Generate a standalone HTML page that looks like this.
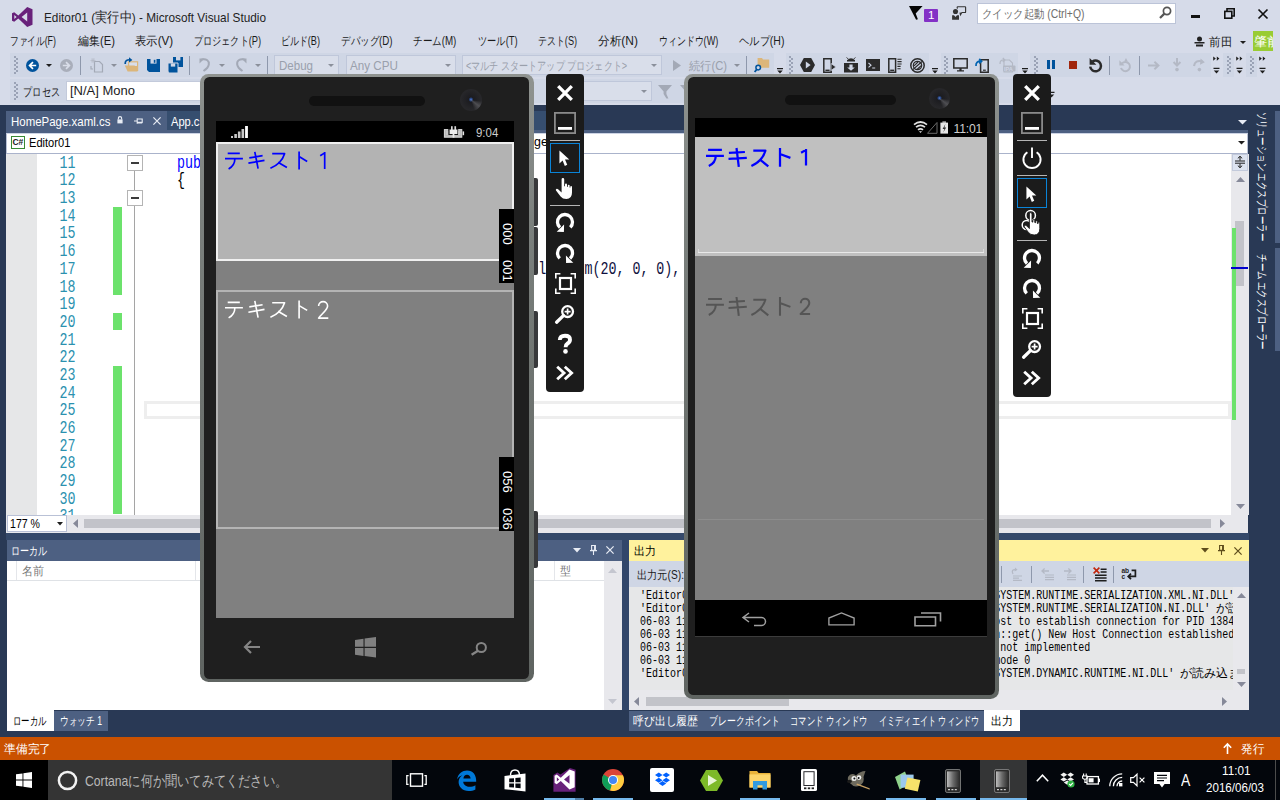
<!DOCTYPE html>
<html><head><meta charset="utf-8">
<style>
*{box-sizing:border-box;margin:0;padding:0}
html,body{width:1280px;height:800px;overflow:hidden;background:#D6DBE9;font-family:"Liberation Sans",sans-serif;}
#r{position:relative;width:1280px;height:800px;overflow:hidden;background:#D6DBE9;}
.a{position:absolute}
.t{position:absolute;white-space:nowrap;line-height:1}
svg{position:absolute;overflow:visible}
svg text{font-family:"Liberation Sans",sans-serif}
.grip{position:absolute;width:4px;height:18px;margin-left:1px;background-image:radial-gradient(circle at 1px 1px,#626b82 0.5px,transparent 0.9px),radial-gradient(circle at 3px 3px,#626b82 0.5px,transparent 0.9px);background-size:4px 4px;}
.sep{position:absolute;width:1px;background:#8e98ac}
.ln{position:absolute;white-space:nowrap;line-height:1;font-family:"Liberation Mono",monospace;font-size:13.33px;color:#2B91AF;left:59.5px;transform:scaleY(1.4);transform-origin:0 50%;}
.gb{position:absolute;background:#6CE26C;left:113px;width:9px}
.ot{position:absolute;white-space:pre;line-height:1;font-family:"Liberation Mono",monospace;font-size:10px;color:#000;transform:scaleY(1.22);transform-origin:0 50%;}
</style></head><body><div id="r">
<svg style="left:12px;top:7px" width="21" height="20" viewBox="0 0 21 20"><path d="M15.2 0 L20.5 2.2 V17.8 L15.2 20 L6.3 11.6 L2.2 14.8 L0 13.7 V6.3 L2.2 5.2 L6.3 8.4 Z M15.2 5.6 L9.6 10 L15.2 14.4 Z M2.3 7.9 V12.1 L4.6 10 Z" fill="#68217A" fill-rule="evenodd"/></svg>
<svg style="left:44px;top:0" width="222.0" height="1"><text x="0" y="22.4" font-size="13.5" fill="#1e1e1e" textLength="222.0" lengthAdjust="spacingAndGlyphs" >Editor01 (実行中) - Microsoft Visual Studio</text></svg>
<svg style="left:909px;top:6.1px" width="14" height="15" viewBox="0 0 14 15"><path d="M0 0H13.6L6.7 7.5L8.9 13.3L7.1 13.8Z" fill="#050505"/></svg>
<div class="a" style="left:924px;top:9px;width:14px;height:13px;background:#8331c6;border-radius:1px"></div>
<div class="t" style="left:928px;top:9.8px;font-size:11.5px;color:#fff;">1</div>
<svg style="left:952px;top:6px" width="15" height="14" viewBox="0 0 15 14"><path d="M5.2 4V1.3Q5.2 0.7 5.8 0.7H13Q13.6 0.7 13.6 1.3V5.9Q13.6 6.5 13 6.5H9.9L8.5 8.7L8 6.5" fill="none" stroke="#333" stroke-width="1.15"/><circle cx="3.5" cy="5.5" r="3.3" fill="#D6DBE9"/><circle cx="3.5" cy="5.5" r="2.55" fill="#333"/><path d="M0.1 9.3H2L3.5 11L5 9.3H7V13.8H0.1Z" fill="#333"/></svg>
<div class="a" style="left:976.5px;top:2.5px;width:199px;height:21.5px;background:#fff;border:1px solid #bcc4d8"></div>
<svg style="left:981.5px;top:0" width="102.5" height="1"><text x="0" y="17.7" font-size="12" fill="#6e6e6e" textLength="102.5" lengthAdjust="spacingAndGlyphs" >クイック起動 (Ctrl+Q)</text></svg>
<svg style="left:1159px;top:6px" width="13" height="13" viewBox="0 0 13 13"><circle cx="8" cy="5" r="3.6" fill="none" stroke="#555" stroke-width="1.7"/><path d="M5.4 7.6L1 12" stroke="#555" stroke-width="2.2"/></svg>
<div class="a" style="left:1191px;top:15px;width:9px;height:2.6px;background:#111;"></div>
<svg style="left:1224px;top:8px" width="11" height="11" viewBox="0 0 11 11"><path d="M3 3V0.8H10.2V8H8" fill="none" stroke="#111" stroke-width="1.6"/><rect x="0.8" y="3.4" width="7" height="6.8" fill="none" stroke="#111" stroke-width="1.6"/></svg>
<svg style="left:1258px;top:8.5px" width="10" height="10" viewBox="0 0 10 10"><path d="M0.5 0.5L9.5 9.5M9.5 0.5L0.5 9.5" stroke="#111" stroke-width="1.7"/></svg>
<svg style="left:1194px;top:36px" width="11" height="11" viewBox="0 0 11 11"><circle cx="5.5" cy="3" r="2.5" fill="#222"/><path d="M0.5 6H10.5V7.5H0.5ZM2 8.5H9V10.5H2Z" fill="#222"/></svg>
<svg style="left:1209px;top:0" width="23.0" height="1"><text x="0" y="45.8" font-size="12" fill="#1b1b1c" textLength="23.0" lengthAdjust="spacingAndGlyphs" >前田</text></svg>
<svg style="left:1239.5px;top:40.5px" width="6" height="3" viewBox="0 0 6 3"><path d="M0 0H6L3 3Z" fill="#1e1e1e"/></svg>
<div class="a" style="left:1253px;top:31px;width:20px;height:20px;background:#99cc33;overflow:hidden"></div>
<svg style="left:1254px;top:0" width="26.0" height="1"><text x="0" y="46.0" font-size="12.5" fill="#fff" textLength="26.0" lengthAdjust="spacingAndGlyphs" >肇前</text></svg>
<div class="a" style="left:1273px;top:31px;width:7px;height:20px;background:#D6DBE9;"></div>
<svg style="left:10.3px;top:0" width="46.0" height="1"><text x="0" y="45.4" font-size="12.3" fill="#1b1b1c" textLength="46.0" lengthAdjust="spacingAndGlyphs" >ファイル(F)</text></svg>
<svg style="left:77.5px;top:0" width="36.9" height="1"><text x="0" y="45.4" font-size="12.3" fill="#1b1b1c" textLength="36.9" lengthAdjust="spacingAndGlyphs" >編集(E)</text></svg>
<svg style="left:135.3px;top:0" width="38.1" height="1"><text x="0" y="45.4" font-size="12.3" fill="#1b1b1c" textLength="38.1" lengthAdjust="spacingAndGlyphs" >表示(V)</text></svg>
<svg style="left:193.8px;top:0" width="67.2" height="1"><text x="0" y="45.4" font-size="12.3" fill="#1b1b1c" textLength="67.2" lengthAdjust="spacingAndGlyphs" >プロジェクト(P)</text></svg>
<svg style="left:281.3px;top:0" width="39.0" height="1"><text x="0" y="45.4" font-size="12.3" fill="#1b1b1c" textLength="39.0" lengthAdjust="spacingAndGlyphs" >ビルド(B)</text></svg>
<svg style="left:340.6px;top:0" width="51.6" height="1"><text x="0" y="45.4" font-size="12.3" fill="#1b1b1c" textLength="51.6" lengthAdjust="spacingAndGlyphs" >デバッグ(D)</text></svg>
<svg style="left:413px;top:0" width="43.3" height="1"><text x="0" y="45.4" font-size="12.3" fill="#1b1b1c" textLength="43.3" lengthAdjust="spacingAndGlyphs" >チーム(M)</text></svg>
<svg style="left:477.5px;top:0" width="39.7" height="1"><text x="0" y="45.4" font-size="12.3" fill="#1b1b1c" textLength="39.7" lengthAdjust="spacingAndGlyphs" >ツール(T)</text></svg>
<svg style="left:538.4px;top:0" width="39.1" height="1"><text x="0" y="45.4" font-size="12.3" fill="#1b1b1c" textLength="39.1" lengthAdjust="spacingAndGlyphs" >テスト(S)</text></svg>
<svg style="left:598.4px;top:0" width="40.0" height="1"><text x="0" y="45.4" font-size="12.3" fill="#1b1b1c" textLength="40.0" lengthAdjust="spacingAndGlyphs" >分析(N)</text></svg>
<svg style="left:658.8px;top:0" width="59.3" height="1"><text x="0" y="45.4" font-size="12.3" fill="#1b1b1c" textLength="59.3" lengthAdjust="spacingAndGlyphs" >ウィンドウ(W)</text></svg>
<svg style="left:739px;top:0" width="45.4" height="1"><text x="0" y="45.4" font-size="12.3" fill="#1b1b1c" textLength="45.4" lengthAdjust="spacingAndGlyphs" >ヘルプ(H)</text></svg>
<div class="a" style="left:10px;top:53px;width:764px;height:24px;background:#CFD6E5;"></div>
<div class="a" style="left:786px;top:53px;width:143px;height:24px;background:#CFD6E5;"></div>
<div class="a" style="left:941px;top:53px;width:77px;height:24px;background:#CFD6E5;"></div>
<div class="a" style="left:1030px;top:53px;width:181px;height:24px;background:#CFD6E5;"></div>
<div class="a" style="left:1223px;top:53px;width:11px;height:24px;background:#CFD6E5;"></div>
<div class="a" style="left:1246px;top:53px;width:11px;height:24px;background:#CFD6E5;"></div>
<div class="grip" style="left:12.5px;top:56px"></div>
<svg style="left:25.5px;top:58.5px" width="13" height="13" viewBox="0 0 13 13"><circle cx="6.5" cy="6.5" r="6.5" fill="#00539C"/><path d="M7 3.2L3.6 6.5L7 9.8M3.8 6.5H10.2" fill="none" stroke="#fff" stroke-width="1.7"/></svg>
<svg style="left:46px;top:64.0px" width="6" height="3" viewBox="0 0 6 3"><path d="M0 0H6L3 3Z" fill="#1e1e1e"/></svg>
<svg style="left:59.5px;top:58.5px" width="13" height="13" viewBox="0 0 13 13"><circle cx="6.5" cy="6.5" r="6.5" fill="#a9aeba"/><path d="M6 3.2L9.4 6.5L6 9.8M9.2 6.5H2.8" fill="none" stroke="#d9dde8" stroke-width="1.7"/></svg>
<div class="sep" style="left:80px;top:56px;height:19px"></div>
<svg style="left:90px;top:58px" width="14" height="15" viewBox="0 0 14 15"><path d="M4.5 3.5H9.5L12.5 6.5V14H4.5Z" fill="none" stroke="#a3a9b6" stroke-width="1.2"/><path d="M1 8V11H3" fill="none" stroke="#a3a9b6" stroke-width="1.1"/><path d="M3 0V5M0.5 2.5H5.5M1.2 0.8L4.8 4.2M4.8 0.8L1.2 4.2" stroke="#b5bac6" stroke-width="0.8"/></svg>
<svg style="left:111px;top:64.0px" width="6" height="3" viewBox="0 0 6 3"><path d="M0 0H6L3 3Z" fill="#8b909b"/></svg>
<svg style="left:123.5px;top:57px" width="15" height="15" viewBox="0 0 15 15"><path d="M4 4.2H14.2V14H4Z" fill="#DCB67A"/><path d="M5.2 5.4H13V9H5.2Z" fill="#d9deea"/><path d="M0.8 8.6H10.6L13.6 14.4H3.6Z" fill="#DCB67A"/><path d="M1.2 7Q0.8 2.4 6.4 2.8" fill="none" stroke="#00539C" stroke-width="1.7"/><path d="M5 0.2L8.4 2.9L5 5.6Z" fill="#00539C"/></svg>
<svg style="left:146.5px;top:58.5px" width="13" height="13" viewBox="0 0 13 13"><path d="M0 0H13V13H2L0 11Z" fill="#00539C"/><rect x="3.5" y="0" width="6" height="4.6" fill="#CFD6E5"/><rect x="6.8" y="0.8" width="1.6" height="3" fill="#00539C"/></svg>
<svg style="left:168px;top:57px" width="15" height="16" viewBox="0 0 15 16"><path d="M5 0H15V10H7L5 8.4Z" fill="#00539C"/><rect x="8" y="0" width="4.4" height="3.4" fill="#CFD6E5"/><path d="M0 6H10V16H1.6L0 14.6Z" fill="#00539C" stroke="#CFD6E5" stroke-width="1"/><rect x="2.8" y="6.4" width="4.4" height="3.2" fill="#CFD6E5"/></svg>
<div class="sep" style="left:189px;top:56px;height:19px"></div>
<svg style="left:199px;top:58px" width="12" height="14" viewBox="0 0 12 14"><path d="M2.5 1.5Q10.5 0.5 9.8 6.5Q9.3 9.8 4.5 13" fill="none" stroke="#a3a9b6" stroke-width="2"/><path d="M0.5 0.5H5.5L0.5 5.5Z" fill="#a3a9b6"/></svg>
<svg style="left:219px;top:64.0px" width="6" height="3" viewBox="0 0 6 3"><path d="M0 0H6L3 3Z" fill="#8b909b"/></svg>
<svg style="left:235px;top:58px" width="12" height="14" viewBox="0 0 12 14"><path d="M9.5 1.5Q1.5 0.5 2.2 6.5Q2.7 9.8 7.5 13" fill="none" stroke="#a3a9b6" stroke-width="2"/><path d="M11.5 0.5H6.5L11.5 5.5Z" fill="#a3a9b6"/></svg>
<svg style="left:254.5px;top:64.0px" width="6" height="3" viewBox="0 0 6 3"><path d="M0 0H6L3 3Z" fill="#8b909b"/></svg>
<div class="sep" style="left:267px;top:56px;height:19px"></div>
<div class="a" style="left:274px;top:55px;width:65px;height:20px;background:#D9DEEA;border:1px solid #bfc7da"></div><svg style="left:279px;top:0" width="34.0" height="1"><text x="0" y="69.5" font-size="12" fill="#9aa0ac" textLength="34.0" lengthAdjust="spacingAndGlyphs" >Debug</text></svg><svg style="left:328px;top:64.0px" width="6" height="3" viewBox="0 0 6 3"><path d="M0 0H6L3 3Z" fill="#8b909b"/></svg>
<div class="a" style="left:346px;top:55px;width:110px;height:20px;background:#D9DEEA;border:1px solid #bfc7da"></div><svg style="left:350px;top:0" width="48.0" height="1"><text x="0" y="69.5" font-size="12" fill="#9aa0ac" textLength="48.0" lengthAdjust="spacingAndGlyphs" >Any CPU</text></svg><svg style="left:445px;top:64.0px" width="6" height="3" viewBox="0 0 6 3"><path d="M0 0H6L3 3Z" fill="#8b909b"/></svg>
<div class="a" style="left:462px;top:55px;width:200px;height:20px;background:#D9DEEA;border:1px solid #bfc7da"></div><svg style="left:466px;top:0" width="161.0" height="1"><text x="0" y="69.5" font-size="12" fill="#9aa0ac" textLength="161.0" lengthAdjust="spacingAndGlyphs" >&lt;マルチ スタートアップ プロジェクト&gt;</text></svg><svg style="left:651px;top:64.0px" width="6" height="3" viewBox="0 0 6 3"><path d="M0 0H6L3 3Z" fill="#8b909b"/></svg>
<svg style="left:673px;top:59.5px" width="8" height="11" viewBox="0 0 8 11"><path d="M0 0L8 5.5L0 11Z" fill="#a3a9b6"/></svg>
<svg style="left:689px;top:0" width="38.0" height="1"><text x="0" y="69.5" font-size="12" fill="#9aa0ac" textLength="38.0" lengthAdjust="spacingAndGlyphs" >続行(C)</text></svg>
<svg style="left:734px;top:64.0px" width="6" height="3" viewBox="0 0 6 3"><path d="M0 0H6L3 3Z" fill="#8b909b"/></svg>
<div class="sep" style="left:746px;top:56px;height:19px"></div>
<svg style="left:754px;top:57.4px" width="16" height="16" viewBox="0 0 16 16"><path d="M3.6 1H8L9 2.4H15.2V10.8H3.6Z" fill="#DCB67A"/><circle cx="4.2" cy="10.6" r="2.3" fill="#CFD6E5" stroke="#00539C" stroke-width="1.5"/><path d="M2.8 12.4L0.6 15" stroke="#00539C" stroke-width="1.8"/></svg>
<svg style="left:776.5px;top:68px" width="6" height="6" viewBox="0 0 6 6"><path d="M0 0H6V1.2H0Z M0.3 2.6H5.7L3 5.6Z" fill="#1e1e1e"/></svg>
<div class="grip" style="left:788.0px;top:56px"></div>
<svg style="left:800px;top:58px" width="15" height="14" viewBox="0 0 15 14"><path d="M3.8 0H11.2L15 7L11.2 14H3.8L0 7Z" fill="#2b2b2b"/><path d="M5.8 3.6L10.6 7L5.8 10.4Z" fill="#CFD6E5"/></svg>
<svg style="left:823px;top:57.5px" width="13" height="15" viewBox="0 0 13 15"><path d="M0.8 0.8H8.2V14.2H0.8Z" fill="none" stroke="#2b2b2b" stroke-width="1.5"/><rect x="2.4" y="11.6" width="4.2" height="1.4" fill="#2b2b2b"/><path d="M8 5.5L13 9L8 12.5Z" fill="#2b2b2b" stroke="#CFD6E5" stroke-width="0.8"/></svg>
<svg style="left:844px;top:57px" width="14" height="16" viewBox="0 0 14 16"><path d="M3 3.2Q7 -0.6 11 3.2V4.4H3Z" fill="#2b2b2b"/><path d="M2.6 0.4L4.4 2.2M11.4 0.4L9.6 2.2" stroke="#2b2b2b" stroke-width="0.9"/><path d="M0 6H14V15.5H0Z" fill="#2b2b2b"/><path d="M5.4 7.6H8.6V10.4H10.8L7 13.8L3.2 10.4H5.4Z" fill="#CFD6E5"/></svg>
<svg style="left:866px;top:59px" width="14" height="12" viewBox="0 0 14 12"><rect width="14" height="12" fill="#2b2b2b"/><path d="M2.5 4L5 6.2L2.5 8.4M6.2 9H9.2" fill="none" stroke="#CFD6E5" stroke-width="1.1"/></svg>
<svg style="left:888px;top:57.5px" width="14" height="15" viewBox="0 0 14 15"><path d="M0.8 0.8H7.6V14.2H0.8Z" fill="none" stroke="#2b2b2b" stroke-width="1.5"/><rect x="2.2" y="11.6" width="4" height="1.4" fill="#2b2b2b"/><path d="M9.4 1.2H13.6M9.4 3.6H13.6M9.4 6H13.6M9.4 8.4H12.6M9.4 10.8H12.6" stroke="#2b2b2b" stroke-width="1.1"/></svg>
<svg style="left:910px;top:58px" width="15" height="15" viewBox="0 0 15 15"><circle cx="7.5" cy="7.5" r="6.7" fill="none" stroke="#2b2b2b" stroke-width="1.5"/><circle cx="7.5" cy="7.5" r="4.2" fill="none" stroke="#2b2b2b" stroke-width="1.2"/><path d="M3 11.5L12 3.5M4 7.8L8 4M7 11.5L11.2 7.6" stroke="#2b2b2b" stroke-width="1.1"/></svg>
<svg style="left:931.5px;top:68px" width="6" height="6" viewBox="0 0 6 6"><path d="M0 0H6V1.2H0Z M0.3 2.6H5.7L3 5.6Z" fill="#1e1e1e"/></svg>
<div class="grip" style="left:943.0px;top:56px"></div>
<svg style="left:953px;top:58px" width="15" height="14" viewBox="0 0 15 14"><path d="M0.8 0.8H14.2V10H0.8Z" fill="none" stroke="#2b2b2b" stroke-width="1.5"/><path d="M6.4 10H8.6V12.2H11V13.6H4V12.2H6.4Z" fill="#2b2b2b"/></svg>
<svg style="left:975px;top:56.5px" width="15" height="16" viewBox="0 0 15 16"><path d="M5.6 2.8H13.2V15.2H5.6Z" fill="none" stroke="#2b2b2b" stroke-width="1.5"/><rect x="8" y="12.6" width="2.8" height="1.2" fill="#2b2b2b"/><path d="M1 9Q0.6 4 6 4.2M4.2 2L6.6 4.2L4.2 6.4" fill="none" stroke="#0063B1" stroke-width="1.7"/></svg>
<svg style="left:999px;top:57px" width="17" height="16" viewBox="0 0 17 16"><path d="M5 3H10.5L13.5 6V15H5Z" fill="none" stroke="#b4b9c5" stroke-width="1.1"/><rect x="4" y="8.6" width="12.5" height="6" rx="1" fill="#b4b9c5"/><text x="5" y="13.6" font-size="5.6" font-weight="bold" fill="#CFD6E5">IPA</text><path d="M1 7Q0.8 2.6 5.4 3M3.8 1L5.8 3L3.8 5" fill="none" stroke="#b4b9c5" stroke-width="1.3"/></svg>
<svg style="left:1021.5px;top:68px" width="6" height="6" viewBox="0 0 6 6"><path d="M0 0H6V1.2H0Z M0.3 2.6H5.7L3 5.6Z" fill="#1e1e1e"/></svg>
<div class="grip" style="left:1033.0px;top:56px"></div>
<div class="a" style="left:1046.8px;top:60px;width:3px;height:9px;background:#00539C;"></div><div class="a" style="left:1052px;top:60px;width:3px;height:9px;background:#00539C;"></div>
<div class="a" style="left:1068.8px;top:60.8px;width:8.4px;height:8.4px;background:#A1260D;"></div>
<svg style="left:1088px;top:58px" width="15" height="15" viewBox="0 0 15 15"><path d="M4.6 3.4A5.4 5.4 0 1 1 2.2 8.6" fill="none" stroke="#2b2b2b" stroke-width="2.5"/><path d="M1.6 0V6.8H8.4Z" fill="#2b2b2b"/></svg>
<div class="sep" style="left:1109px;top:56px;height:19px"></div>
<svg style="left:1118px;top:58px" width="14" height="15" viewBox="0 0 14 15"><path d="M4 5.4A4.6 4.6 0 1 1 3 10" fill="none" stroke="#b4b9c5" stroke-width="2"/><path d="M1.4 2.2V7.4H6.6Z" fill="#b4b9c5"/><path d="M8 0L9.8 3.4L6.4 3Z" fill="#b4b9c5"/></svg>
<div class="sep" style="left:1139px;top:56px;height:19px"></div>
<svg style="left:1148px;top:60.5px" width="12" height="9" viewBox="0 0 12 9"><path d="M0 4.5H10M6.4 0.8L10.4 4.5L6.4 8.2" fill="none" stroke="#b4b9c5" stroke-width="2"/></svg>
<svg style="left:1172px;top:58px" width="10" height="14" viewBox="0 0 10 14"><path d="M5 0V7M1.6 4L5 7.6L8.4 4" fill="none" stroke="#b4b9c5" stroke-width="2"/><circle cx="5" cy="11.6" r="1.8" fill="#b4b9c5"/></svg>
<svg style="left:1193px;top:58px" width="13" height="14" viewBox="0 0 13 14"><path d="M1 8Q2 1.5 9.4 3.4" fill="none" stroke="#b4b9c5" stroke-width="2.1"/><path d="M7.6 0.4L11.8 4.2L7 6.8Z" fill="#b4b9c5"/><circle cx="6.4" cy="11.6" r="1.8" fill="#b4b9c5"/></svg>
<svg style="left:1213.0px;top:56px" width="7" height="20" viewBox="0 0 7 20"><path d="M0.2 0.4L2.8 2.6L0.2 4.8ZM3.8 0.4L6.4 2.6L3.8 4.8Z" fill="#1e1e1e"/><path d="M0.5 11.8H6.5V13H0.5ZM0.8 14.4H6.2L3.5 17.4Z" fill="#1e1e1e"/></svg>
<div class="grip" style="left:1225.5px;top:56px"></div>
<svg style="left:1236.0px;top:56px" width="7" height="20" viewBox="0 0 7 20"><path d="M0.2 0.4L2.8 2.6L0.2 4.8ZM3.8 0.4L6.4 2.6L3.8 4.8Z" fill="#1e1e1e"/><path d="M0.5 11.8H6.5V13H0.5ZM0.8 14.4H6.2L3.5 17.4Z" fill="#1e1e1e"/></svg>
<div class="grip" style="left:1248.5px;top:56px"></div>
<svg style="left:1259.0px;top:56px" width="7" height="20" viewBox="0 0 7 20"><path d="M0.2 0.4L2.8 2.6L0.2 4.8ZM3.8 0.4L6.4 2.6L3.8 4.8Z" fill="#1e1e1e"/><path d="M0.5 11.8H6.5V13H0.5ZM0.8 14.4H6.2L3.5 17.4Z" fill="#1e1e1e"/></svg>
<div class="a" style="left:10px;top:79px;width:1036px;height:24px;background:#CFD6E5;"></div>
<div class="grip" style="left:12.5px;top:82px"></div>
<svg style="left:23px;top:0" width="37.0" height="1"><text x="0" y="95.6" font-size="12" fill="#1b1b1c" textLength="37.0" lengthAdjust="spacingAndGlyphs" >プロセス</text></svg>
<div class="a" style="left:66px;top:80.5px;width:200px;height:20.5px;background:#fff;border:1px solid #c3cadb"></div>
<svg style="left:70px;top:0" width="65.0" height="1"><text x="0" y="95.4" font-size="12.3" fill="#1b1b1c" textLength="65.0" lengthAdjust="spacingAndGlyphs" >[N/A] Mono</text></svg>
<div class="a" style="left:560px;top:80.5px;width:92px;height:20.5px;background:#D9DEEA;border:1px solid #bfc7da"></div>
<svg style="left:640.5px;top:90.0px" width="6" height="3" viewBox="0 0 6 3"><path d="M0 0H6L3 3Z" fill="#8b909b"/></svg>
<svg style="left:658px;top:84.5px" width="14" height="14" viewBox="0 0 14 14"><path d="M0 0H14L8.4 6.4V9L10.4 13.5H8.4L5.6 9V6.4Z" fill="#a3a9b6"/></svg>
<svg style="left:680px;top:84.5px" width="14" height="14" viewBox="0 0 14 14"><path d="M0 0H14L8.4 6.4V9L10.4 13.5H8.4L5.6 9V6.4Z" fill="#a3a9b6"/></svg>
<svg style="left:1047.5px;top:86px" width="7" height="12" viewBox="0 0 7 12"><path d="M0.5 5.8H6.5V7H0.5ZM0.8 8.4H6.2L3.5 11.4Z" fill="#1e1e1e"/></svg>
<div class="a" style="left:0px;top:105px;width:1280px;height:632px;background:#293955;"></div>
<div class="a" style="left:6px;top:111px;width:161px;height:20px;background:#4D6082;"></div>
<svg style="left:10.6px;top:0" width="99.4" height="1"><text x="0" y="125.5" font-size="12.4" fill="#fff" textLength="99.4" lengthAdjust="spacingAndGlyphs" >HomePage.xaml.cs</text></svg>
<svg style="left:116.5px;top:116px" width="6" height="8" viewBox="0 0 6 8"><path d="M1.4 3.4V2.2Q1.4 0.6 3 0.6Q4.6 0.6 4.6 2.2V3.4" fill="none" stroke="#e8ecf4" stroke-width="1.1"/><rect x="0.4" y="3.4" width="5.2" height="4" fill="#e8ecf4"/></svg>
<svg style="left:134px;top:117px" width="9" height="8" viewBox="0 0 9 8"><path d="M0 4H3.2M3.2 1.2V6.8M3.2 2H8.2V5.4H3.2M3.2 6H8.2" fill="none" stroke="#e8ecf4" stroke-width="1.1"/></svg>
<svg style="left:152.5px;top:117px" width="8" height="8" viewBox="0 0 8 8"><path d="M0.4 0.4L7.6 7.6M7.6 0.4L0.4 7.6" stroke="#e8ecf4" stroke-width="1.2"/></svg>
<div class="a" style="left:167px;top:111px;width:398px;height:20px;background:#364E6F;"></div>
<svg style="left:171px;top:0" width="34.0" height="1"><text x="0" y="125.5" font-size="12.4" fill="#fff" textLength="34.0" lengthAdjust="spacingAndGlyphs" >App.cs</text></svg>
<div class="a" style="left:6px;top:130px;width:1242px;height:3px;background:#4D6082;"></div>
<svg style="left:1238px;top:120px" width="9" height="5" viewBox="0 0 9 5"><path d="M0 0H9L4.5 4.6Z" fill="#e8ecf4"/></svg>
<div class="a" style="left:6px;top:132.5px;width:1242px;height:21px;background:#fff;border:1px solid #b9c1d6;border-top-color:#ccd3e4;border-bottom:1.6px solid #aab3cb"></div>
<div class="a" style="left:11px;top:136px;width:14px;height:12.5px;background:#fff;border:1.2px solid #388A34"></div>
<div class="t" style="left:12.6px;top:138.1px;font-size:8.6px;color:#222;font-weight:bold;letter-spacing:-0.4px">C#</div>
<svg style="left:28.7px;top:0" width="41.3" height="1"><text x="0" y="147.1" font-size="12.4" fill="#000" textLength="41.3" lengthAdjust="spacingAndGlyphs" >Editor01</text></svg>
<div class="t" style="left:534px;top:136.4px;font-size:12.4px;color:#000;">ge</div>
<svg style="left:1238px;top:141px" width="7" height="4" viewBox="0 0 7 4"><path d="M0 0H7L3.5 3.6Z" fill="#1e1e1e"/></svg>
<div class="a" style="left:6px;top:153.5px;width:1242px;height:379px;background:#fff;"></div>
<div class="a" style="left:6px;top:153.5px;width:31px;height:361px;background:#E6E7E8;"></div>
<div class="ln" style="top:156.7px">11</div>
<div class="ln" style="top:174.4px">12</div>
<div class="ln" style="top:192.1px">13</div>
<div class="ln" style="top:209.7px">14</div>
<div class="ln" style="top:227.4px">15</div>
<div class="ln" style="top:245.1px">16</div>
<div class="ln" style="top:262.8px">17</div>
<div class="ln" style="top:280.5px">18</div>
<div class="ln" style="top:298.1px">19</div>
<div class="ln" style="top:315.8px">20</div>
<div class="ln" style="top:333.5px">21</div>
<div class="ln" style="top:351.2px">22</div>
<div class="ln" style="top:368.9px">23</div>
<div class="ln" style="top:386.5px">24</div>
<div class="ln" style="top:404.2px">25</div>
<div class="ln" style="top:421.9px">26</div>
<div class="ln" style="top:439.6px">27</div>
<div class="ln" style="top:457.3px">28</div>
<div class="ln" style="top:474.9px">29</div>
<div class="ln" style="top:492.6px">30</div>
<div class="ln" style="top:510.3px">31</div>
<div class="gb" style="top:206.6px;height:88.4px"></div>
<div class="gb" style="top:312.7px;height:17.7px"></div>
<div class="gb" style="top:365.8px;height:148.7px"></div>
<div class="a" style="left:134px;top:171px;width:1.4px;height:343.5px;background:#A5A5A5;"></div>
<div class="a" style="left:127px;top:155px;width:15.5px;height:15.5px;background:#fff;border:1.6px solid #b4b4b4"></div>
<div class="a" style="left:130.5px;top:161.6px;width:8.5px;height:2px;background:#3c3c3c;"></div>
<div class="a" style="left:127px;top:190.3px;width:15.5px;height:15.5px;background:#fff;border:1.6px solid #b4b4b4"></div>
<div class="a" style="left:130.5px;top:196.9px;width:8.5px;height:2px;background:#3c3c3c;"></div>
<div class="t" style="left:177px;top:156.7px;color:#0000ff;font-family:'Liberation Mono',monospace;font-size:13.33px;transform:scaleY(1.4);transform-origin:0 50%">pub</div>
<div class="t" style="left:177px;top:174.4px;color:#000;font-family:'Liberation Mono',monospace;font-size:13.33px;transform:scaleY(1.4);transform-origin:0 50%">{</div>
<div class="t" style="left:538.2px;top:262.8px;color:#101040;font-family:'Liberation Mono',monospace;font-size:13.33px;transform:scaleY(1.4);transform-origin:0 50%">la</div>
<div class="t" style="left:584.4px;top:262.8px;color:#101040;font-family:'Liberation Mono',monospace;font-size:13.33px;transform:scaleY(1.4);transform-origin:0 50%">m(20, 0, 0),</div>
<div class="a" style="left:144px;top:401.3px;width:1087px;height:17.7px;background:#fff;border:3px solid #EEEEEE"></div>
<div class="a" style="left:6px;top:514.5px;width:1242px;height:18px;background:#E8E8EC;"></div>
<div class="a" style="left:1231px;top:153.5px;width:17.5px;height:361px;background:#E8E8EC;"></div>
<div class="a" style="left:1232px;top:153.5px;width:16px;height:17px;background:#DDE3F0;border:1px solid #c3cadb"></div>
<svg style="left:1235px;top:156px" width="10" height="12" viewBox="0 0 10 12"><path d="M0 5H10M0 7.2H10" stroke="#1e1e1e" stroke-width="1"/><path d="M5 0.4V4.6M5 7.6V11.6M2.8 2.4L5 0.3L7.2 2.4M2.8 9.6L5 11.7L7.2 9.6" fill="none" stroke="#1e1e1e" stroke-width="1"/></svg>
<svg style="left:1235.5px;top:177px" width="9" height="5" viewBox="0 0 9 5"><path d="M0 5H9L4.5 0Z" fill="#868999"/></svg>
<svg style="left:1235.5px;top:504px" width="9" height="5" viewBox="0 0 9 5"><path d="M0 0H9L4.5 5Z" fill="#868999"/></svg>
<div class="a" style="left:1235px;top:221px;width:9px;height:65px;background:#C2C3C9;"></div>
<div class="a" style="left:1232px;top:227.5px;width:3.6px;height:192.5px;background:#6CE26C;"></div>
<div class="a" style="left:1231px;top:267px;width:17px;height:2px;background:#0000CD;"></div>
<div class="a" style="left:7px;top:515px;width:59.5px;height:17px;background:#fff;border:1px solid #b9c1d6"></div>
<svg style="left:10px;top:0" width="30.0" height="1"><text x="0" y="528.0" font-size="12.2" fill="#000" textLength="30.0" lengthAdjust="spacingAndGlyphs" >177 %</text></svg>
<svg style="left:57px;top:522px" width="6" height="4" viewBox="0 0 6 4"><path d="M0 0H6L3 3.4Z" fill="#1e1e1e"/></svg>
<svg style="left:72.5px;top:519px" width="5" height="9" viewBox="0 0 5 9"><path d="M5 0V9L0 4.5Z" fill="#868999"/></svg>
<svg style="left:1219.5px;top:519px" width="5" height="9" viewBox="0 0 5 9"><path d="M0 0V9L5 4.5Z" fill="#868999"/></svg>
<div class="a" style="left:84px;top:519.3px;width:1127px;height:8.7px;background:#C2C3C9;"></div>
<div class="a" style="left:1274.5px;top:111px;width:5.5px;height:132px;background:#4D6082;"></div>
<div class="a" style="left:1274.5px;top:247.5px;width:5.5px;height:103px;background:#4D6082;"></div>
<svg style="left:1256px;top:0" width="16" height="400"><text transform="translate(1.5,112) rotate(90)" font-size="12" fill="#fff" textLength="129" lengthAdjust="spacingAndGlyphs">ソリューション エクスプローラー</text><text transform="translate(1.5,254) rotate(90)" font-size="12" fill="#fff" textLength="96" lengthAdjust="spacingAndGlyphs">チーム エクスプローラー</text></svg>
<div class="a" style="left:6px;top:532.5px;width:1243px;height:7px;background:#35496A;"></div>
<div class="a" style="left:621.5px;top:539.5px;width:7px;height:170.7px;background:#31466A;"></div>
<div class="a" style="left:7px;top:539.5px;width:614.5px;height:21.5px;background:#4D6082;"></div>
<svg style="left:11px;top:0" width="36.0" height="1"><text x="0" y="554.6" font-size="12" fill="#fff" textLength="36.0" lengthAdjust="spacingAndGlyphs" >ローカル</text></svg>
<svg style="left:573px;top:547.5px" width="8" height="4.4" viewBox="0 0 8 4.4"><path d="M0 0H8L4 4.4Z" fill="#e8ecf4"/></svg>
<svg style="left:589.5px;top:545px" width="7" height="10" viewBox="0 0 7 10"><path d="M1.6 0.5H5.4V5.4H1.6ZM0 5.6H7M3.5 5.6V10M4.6 0.5V5.4" fill="none" stroke="#e8ecf4" stroke-width="1.1"/></svg>
<svg style="left:605.5px;top:546.3px" width="8" height="8" viewBox="0 0 8 8"><path d="M0.4 0.4L7.6 7.6M7.6 0.4L0.4 7.6" stroke="#e8ecf4" stroke-width="1.25"/></svg>
<div class="a" style="left:7px;top:561px;width:614.5px;height:149.2px;background:#fff;"></div>
<div class="a" style="left:7px;top:580px;width:597px;height:1px;background:#dfe2e6;"></div>
<div class="a" style="left:15.5px;top:561px;width:1px;height:19px;background:#e4e6ea;"></div>
<div class="a" style="left:194.5px;top:561px;width:1px;height:19px;background:#e4e6ea;"></div>
<div class="a" style="left:553.5px;top:561px;width:1px;height:19px;background:#e4e6ea;"></div>
<svg style="left:22px;top:0" width="22.0" height="1"><text x="0" y="575.1" font-size="11.5" fill="#7a7a7a" textLength="22.0" lengthAdjust="spacingAndGlyphs" >名前</text></svg>
<svg style="left:560px;top:0" width="11.0" height="1"><text x="0" y="575.1" font-size="11.5" fill="#7a7a7a" textLength="11.0" lengthAdjust="spacingAndGlyphs" >型</text></svg>
<div class="a" style="left:604px;top:561px;width:17.5px;height:149.2px;background:#E8E8EC;"></div>
<svg style="left:608px;top:568px" width="9" height="5" viewBox="0 0 9 5"><path d="M0 5H9L4.5 0Z" fill="#c4c6cf"/></svg>
<svg style="left:608px;top:699px" width="9" height="5" viewBox="0 0 9 5"><path d="M0 0H9L4.5 5Z" fill="#c4c6cf"/></svg>
<div class="a" style="left:7px;top:710px;width:46.5px;height:20.5px;background:#fff;"></div>
<svg style="left:12.5px;top:0" width="33.5" height="1"><text x="0" y="724.6" font-size="12" fill="#000" textLength="33.5" lengthAdjust="spacingAndGlyphs" >ローカル</text></svg>
<div class="a" style="left:54px;top:711px;width:53.5px;height:19.5px;background:#4D6082;"></div>
<svg style="left:60px;top:0" width="42.0" height="1"><text x="0" y="724.6" font-size="12" fill="#fff" textLength="42.0" lengthAdjust="spacingAndGlyphs" >ウォッチ 1</text></svg>
<div class="a" style="left:628.5px;top:539.5px;width:620.5px;height:21.5px;background:#FFF29D;"></div>
<svg style="left:634px;top:0" width="22.0" height="1"><text x="0" y="554.8" font-size="12" fill="#000" textLength="22.0" lengthAdjust="spacingAndGlyphs" >出力</text></svg>
<svg style="left:1201px;top:548px" width="8" height="4.4" viewBox="0 0 8 4.4"><path d="M0 0H8L4 4.4Z" fill="#5e4d1c"/></svg>
<svg style="left:1218.0px;top:545.3px" width="7" height="10" viewBox="0 0 7 10"><path d="M1.6 0.5H5.4V5.4H1.6ZM0 5.6H7M3.5 5.6V10M4.6 0.5V5.4" fill="none" stroke="#5e4d1c" stroke-width="1.1"/></svg>
<svg style="left:1234px;top:546.5px" width="8" height="8" viewBox="0 0 8 8"><path d="M0.4 0.4L7.6 7.6M7.6 0.4L0.4 7.6" stroke="#5e4d1c" stroke-width="1.25"/></svg>
<div class="a" style="left:628.5px;top:561px;width:620.5px;height:26px;background:#CFD6E5;"></div>
<svg style="left:637px;top:0" width="47.0" height="1"><text x="0" y="578.6" font-size="12" fill="#1b1b1c" textLength="47.0" lengthAdjust="spacingAndGlyphs" >出力元(S):</text></svg>
<div class="a" style="left:1000.8px;top:566px;width:1px;height:17px;background:#8e98ac;"></div>
<div class="a" style="left:1030.8px;top:566px;width:1px;height:17px;background:#8e98ac;"></div>
<div class="a" style="left:1082.7px;top:566px;width:1px;height:17px;background:#8e98ac;"></div>
<div class="a" style="left:1112.8px;top:566px;width:1px;height:17px;background:#8e98ac;"></div>
<svg style="left:1010px;top:567px" width="13" height="14" viewBox="0 0 13 14"><path d="M3 7Q0.6 2 6.2 2.6" fill="none" stroke="#b4b9c5" stroke-width="1.3"/><path d="M5 0.6L7.6 2.8L4.6 4.6Z" fill="#b4b9c5"/><path d="M3 9H12M3 11.2H9M3 13.4H12" stroke="#b4b9c5" stroke-width="1.2"/></svg>
<svg style="left:1041px;top:568px" width="13" height="12" viewBox="0 0 13 12"><path d="M1 3H8M3.6 0.6L1 3L3.6 5.4" fill="none" stroke="#b4b9c5" stroke-width="1.3"/><path d="M4 7H13M4 9.4H13M4 11.6H13" stroke="#b4b9c5" stroke-width="1.2"/></svg>
<svg style="left:1063px;top:568px" width="13" height="12" viewBox="0 0 13 12"><path d="M1 3H8M5.4 0.6L8 3L5.4 5.4" fill="none" stroke="#b4b9c5" stroke-width="1.3"/><path d="M4 7H13M4 9.4H13M4 11.6H13" stroke="#b4b9c5" stroke-width="1.2"/></svg>
<svg style="left:1092.5px;top:566.5px" width="14" height="15" viewBox="0 0 14 15"><path d="M0.6 0.6L6.4 6.4M6.4 0.6L0.6 6.4" stroke="#C2260D" stroke-width="1.6"/><path d="M7.6 2.2H13.6M7.6 5H13.6M2 8.2H13.6M2 11H13.6M2 13.8H13.6" stroke="#1e1e1e" stroke-width="1.5"/></svg>
<svg style="left:1121.5px;top:567px" width="16" height="14" viewBox="0 0 16 14"><text x="-0.6" y="5.6" font-size="6.6" fill="#1e1e1e" font-weight="bold">ab</text><text x="-0.4" y="11.6" font-size="6.6" fill="#1e1e1e" font-weight="bold">c</text><path d="M9.6 3.4H13.4V9.4H6.6M9 6.6L6.2 9.4L9 12.2" fill="none" stroke="#1e1e1e" stroke-width="1.7"/></svg>
<div class="a" style="left:628.5px;top:587px;width:620.5px;height:123.2px;background:#E6E7E8;"></div>
<div class="a" style="left:628.5px;top:587px;width:604.5px;height:103px;overflow:hidden">
<div class="ot" style="left:11.5px;top:5.0px">'Editor01.Droid</div>
<div class="ot" style="left:365.75px;top:5.0px">SYSTEM.RUNTIME.SERIALIZATION.XML.NI.DLL'</div>
<div class="ot" style="left:11.5px;top:18.0px">'Editor01.Droid</div>
<div class="ot" style="left:365.75px;top:18.0px">SYSTEM.RUNTIME.SERIALIZATION.NI.DLL'</div>
<div class="ot" style="left:11.5px;top:31.0px">06-03 11:01:02</div>
<div class="ot" style="left:365.75px;top:31.0px">ost to establish connection for PID 13845</div>
<div class="ot" style="left:11.5px;top:44.1px">06-03 11:01:02</div>
<div class="ot" style="left:365.75px;top:44.1px">h::get() New Host Connection established.</div>
<div class="ot" style="left:11.5px;top:57.1px">06-03 11:01:02</div>
<div class="ot" style="left:365.75px;top:57.1px"> not implemented</div>
<div class="ot" style="left:11.5px;top:70.1px">06-03 11:01:02</div>
<div class="ot" style="left:365.75px;top:70.1px">mode 0</div>
<div class="ot" style="left:11.5px;top:83.1px">'Editor01.Droid</div>
<div class="ot" style="left:365.75px;top:83.1px">SYSTEM.DYNAMIC.RUNTIME.NI.DLL'</div>
</div>
<div class="a" style="left:1200px;top:587px;width:33px;height:103px;overflow:hidden"><svg style="left:16px;top:0" width="24.0" height="1"><text x="0" y="24.9" font-size="12" fill="#000" textLength="24.0" lengthAdjust="spacingAndGlyphs" >が読</text></svg></div>
<div class="a" style="left:1170px;top:587px;width:63px;height:103px;overflow:hidden"><svg style="left:10px;top:0" width="60.0" height="1"><text x="0" y="90.0" font-size="12" fill="#000" textLength="60.0" lengthAdjust="spacingAndGlyphs" >が読み込ま</text></svg></div>
<div class="a" style="left:1233px;top:587px;width:16px;height:103px;background:#E8E8EC;"></div>
<svg style="left:1236.5px;top:592.5px" width="9" height="5" viewBox="0 0 9 5"><path d="M0 5H9L4.5 0Z" fill="#868999"/></svg>
<svg style="left:1236.5px;top:681.5px" width="9" height="5" viewBox="0 0 9 5"><path d="M0 0H9L4.5 5Z" fill="#868999"/></svg>
<div class="a" style="left:1236.5px;top:668.5px;width:8px;height:5.5px;background:#C2C3C9;"></div>
<div class="a" style="left:628.5px;top:690px;width:620.5px;height:20.2px;background:#E8E8EC;"></div>
<svg style="left:634px;top:697px" width="5" height="9" viewBox="0 0 5 9"><path d="M5 0V9L0 4.5Z" fill="#868999"/></svg>
<svg style="left:1221.5px;top:697px" width="5" height="9" viewBox="0 0 5 9"><path d="M0 0V9L5 4.5Z" fill="#868999"/></svg>
<div class="a" style="left:646px;top:696.5px;width:143px;height:9px;background:#C2C3C9;"></div>
<div class="a" style="left:628.5px;top:711px;width:355.5px;height:19.5px;background:#4D6082;"></div>
<svg style="left:633px;top:0" width="65.0" height="1"><text x="0" y="724.6" font-size="12" fill="#fff" textLength="65.0" lengthAdjust="spacingAndGlyphs" >呼び出し履歴</text></svg>
<svg style="left:708.8px;top:0" width="71.2" height="1"><text x="0" y="724.6" font-size="12" fill="#fff" textLength="71.2" lengthAdjust="spacingAndGlyphs" >ブレークポイント</text></svg>
<svg style="left:790px;top:0" width="77.5" height="1"><text x="0" y="724.6" font-size="12" fill="#fff" textLength="77.5" lengthAdjust="spacingAndGlyphs" >コマンド ウィンドウ</text></svg>
<svg style="left:878.8px;top:0" width="100.2" height="1"><text x="0" y="724.6" font-size="12" fill="#fff" textLength="100.2" lengthAdjust="spacingAndGlyphs" >イミディエイト ウィンドウ</text></svg>
<div class="a" style="left:984px;top:710px;width:35.5px;height:20.5px;background:#fff;"></div>
<svg style="left:991px;top:0" width="22.0" height="1"><text x="0" y="724.6" font-size="12" fill="#000" textLength="22.0" lengthAdjust="spacingAndGlyphs" >出力</text></svg>
<div class="a" style="left:0px;top:737px;width:1280px;height:23px;background:#CA5100;"></div>
<svg style="left:4px;top:0" width="47.0" height="1"><text x="0" y="752.8" font-size="12" fill="#fff" textLength="47.0" lengthAdjust="spacingAndGlyphs" >準備完了</text></svg>
<svg style="left:1222.5px;top:743px" width="9" height="11" viewBox="0 0 9 11"><path d="M4.5 11V1M0.8 4.8L4.5 1L8.2 4.8" fill="none" stroke="#fff" stroke-width="1.6"/></svg>
<svg style="left:1241px;top:0" width="23.0" height="1"><text x="0" y="752.8" font-size="12" fill="#fff" textLength="23.0" lengthAdjust="spacingAndGlyphs" >発行</text></svg>
<div class="a" style="left:0px;top:760px;width:1280px;height:40px;background:#03060c;"></div>
<div class="a" style="left:0px;top:760px;width:48px;height:40px;background:#000;"></div>
<svg style="left:16px;top:772px" width="16" height="16" viewBox="0 0 16 16"><path d="M0 2.3L6.5 1.4V7.6H0ZM7.4 1.25L16 0V7.6H7.4ZM0 8.4H6.5V14.6L0 13.7ZM7.4 8.4H16V16L7.4 14.75Z" fill="#fff"/></svg>
<div class="a" style="left:48px;top:760px;width:344px;height:40px;background:#343434;"></div>
<svg style="left:57px;top:770px" width="21" height="21" viewBox="0 0 21 21"><circle cx="10.5" cy="10.5" r="8.6" fill="none" stroke="#f2f2f2" stroke-width="2.5"/></svg>
<svg style="left:85px;top:0" width="202.0" height="1"><text x="0" y="785.9" font-size="15" fill="#b9b9b9" textLength="202.0" lengthAdjust="spacingAndGlyphs" >Cortanaに何か聞いてみてください。</text></svg>
<svg style="left:405.5px;top:773px" width="21" height="14" viewBox="0 0 21 14"><rect x="4.5" y="0.8" width="12" height="12.4" fill="none" stroke="#fff" stroke-width="1.4"/><path d="M2.6 2.6H0.8V11.4H2.6M18.4 2.6H20.2V11.4H18.4" fill="none" stroke="#fff" stroke-width="1.3"/></svg>
<svg style="left:456px;top:770px" width="21" height="21" viewBox="0 0 21 21"><path d="M1 9.5C2 3.5 6.5 0.5 11 0.5C17 0.5 20.5 5 20.2 11.8H7.2C7.5 15 10.5 16.8 13.5 16.8C15.8 16.8 17.8 16.2 19.4 15.2V19.4C17.6 20.4 15.2 20.9 12.6 20.9C6.5 20.9 2.6 17 2.6 12C2.6 9 4.2 6.6 6.4 5.2C3.8 5.8 2.2 7.4 1 9.5ZM7.4 8.6H14.6C14.5 6 12.9 4.7 11 4.7C9 4.7 7.6 6.3 7.4 8.6Z" fill="#0078D7"/></svg>
<svg style="left:504px;top:769px" width="22" height="23" viewBox="0 0 22 23"><path d="M6.5 6.5Q6.5 1 11 1Q15.5 1 15.5 6.5" fill="none" stroke="#fff" stroke-width="1.4"/><path d="M0.5 7L21.5 4.6V22.6L0.5 20.2Z" fill="#fff"/><path d="M5.2 9.6L10 9.2V13.2H5.2ZM11.4 9.1L16.6 8.6V13.2H11.4ZM5.2 14.4H10V18.6L5.2 18.2ZM11.4 14.4H16.6V19.2L11.4 18.7Z" fill="#03060c"/></svg>
<svg style="left:552.5px;top:768px" width="23" height="24" viewBox="0 0 23 24"><path d="M0.4 23.8V7L4.4 4.6L7.4 6.6L17 0L22.6 1.8V23.8Z" fill="#68217A"/><g transform="translate(1.6,1.4) scale(0.98,1.0)"><path d="M15.2 0 L20.5 2.2 V17.8 L15.2 20 L6.3 11.6 L2.2 14.8 L0 13.7 V6.3 L2.2 5.2 L6.3 8.4 Z M15.2 5.6 L9.6 10 L15.2 14.4 Z M2.3 7.9 V12.1 L4.6 10 Z" fill="#fff" fill-rule="evenodd"/></g></svg>
<svg style="left:602px;top:769px" width="22" height="22" viewBox="0 0 22 22"><circle cx="11" cy="11" r="11" fill="#DB4437"/><path d="M11 11L1.5 5.5A11 11 0 0 0 8.2 21.6Z" fill="#0F9D58"/><path d="M11 11H22A11 11 0 0 1 8.2 21.6Z" fill="#FFCD40"/><path d="M11 6.2H20.9A11 11 0 0 1 22 11H11Z" fill="#FFCD40"/><circle cx="11" cy="11" r="5" fill="#fff"/><circle cx="11" cy="11" r="4" fill="#4285F4"/></svg>
<div class="a" style="left:650px;top:768px;width:24px;height:24px;background:#fff;border-radius:2px"></div>
<svg style="left:654.5px;top:772px" width="15" height="15" viewBox="0 0 15 15"><path d="M3.8 0.6L0 3.1L3.8 5.6L7.5 3.1ZM11.2 0.6L7.5 3.1L11.2 5.6L15 3.1ZM0 8.2L3.8 10.7L7.5 8.2L3.8 5.7ZM11.2 5.7L7.5 8.2L11.2 10.7L15 8.2ZM3.8 11.6L7.5 14.1L11.2 11.6L7.5 9.1Z" fill="#0061FE"/></svg>
<svg style="left:699.5px;top:769.5px" width="23" height="21" viewBox="0 0 23 21"><path d="M6 0H17L23 10.5L17 21H6L0 10.5Z" fill="#7DB928"/><path d="M8 5L17 10.5L8 16Z" fill="#e9f5d6"/></svg>
<svg style="left:749px;top:770px" width="22" height="20" viewBox="0 0 22 20"><path d="M0.5 1H8L9.6 3H21.5V17.5H0.5Z" fill="#E9B33A"/><path d="M0.5 4.4H21.5V17.5H0.5Z" fill="#FCD56B"/><path d="M4 11H18V19.5H13.5V15.2H8.5V19.5H4Z" fill="#2F9BE0"/></svg>
<svg style="left:800px;top:768px" width="18" height="24" viewBox="0 0 18 24"><rect x="1" y="1" width="16" height="22" rx="1.6" fill="#fff"/><rect x="3.4" y="3.2" width="11.2" height="14.8" fill="#2a2a2e"/><rect x="4.4" y="4.2" width="9.2" height="12.8" fill="#fff"/><rect x="4" y="19.4" width="2.4" height="1.8" fill="#222"/><rect x="7.8" y="19.4" width="2.4" height="1.8" fill="#222"/><rect x="11.6" y="19.4" width="2.4" height="1.8" fill="#222"/></svg>
<svg style="left:846px;top:770px" width="25" height="20" viewBox="0 0 25 20"><path d="M2 7Q5 2 10 5.5Q14 1 19.5 1L17.5 7Q19 12 14 15.5Q8 18 4.5 13.5Q1 12 2 7Z" fill="#6e6a5e"/><circle cx="8" cy="8.4" r="2.5" fill="#f0f0f0"/><circle cx="13" cy="7.6" r="2.3" fill="#f0f0f0"/><circle cx="8.4" cy="8.6" r="1" fill="#111"/><circle cx="12.6" cy="8" r="1" fill="#111"/><ellipse cx="3.4" cy="11.4" rx="2.4" ry="1.7" fill="#1a1a1a"/><path d="M11 13.6L23.5 18.2L24 19.4L22.6 19.2L10.4 14.8Z" fill="#c9a165"/></svg>
<svg style="left:895px;top:770px" width="26" height="22" viewBox="0 0 26 22"><path d="M0 7L10 1.6L14.6 14L4.6 19.4Z" fill="#8fd18b"/><path d="M5.6 4.6H18.6V17.6H5.6Z" fill="#9cc9ec"/><path d="M12.4 7.4L25.4 10L22.8 21.4L9.8 18.8Z" fill="#F7E36A"/></svg>
<svg style="left:944px;top:768.5px" width="18" height="24" viewBox="0 0 18 24"><defs><linearGradient id="pg944" x1="0" y1="0" x2="1" y2="0"><stop offset="0" stop-color="#bdbdbd"/><stop offset=".5" stop-color="#6a6a6a"/><stop offset="1" stop-color="#303030"/></linearGradient></defs><rect x="1.5" y="0.5" width="15" height="23" rx="1.6" fill="#2c2c2c" stroke="#8a8a8a" stroke-width="0.8"/><rect x="3" y="2.4" width="12" height="15.8" fill="url(#pg944)"/><path d="M4 20.6H14" stroke="#d0d0d0" stroke-width="1.2" stroke-dasharray="2 1.4"/></svg>
<div class="a" style="left:980px;top:760px;width:47px;height:40px;background:#343536;"></div>
<svg style="left:993px;top:768.5px" width="18" height="24" viewBox="0 0 18 24"><defs><linearGradient id="pg993" x1="0" y1="0" x2="1" y2="0"><stop offset="0" stop-color="#bdbdbd"/><stop offset=".5" stop-color="#6a6a6a"/><stop offset="1" stop-color="#303030"/></linearGradient></defs><rect x="1.5" y="0.5" width="15" height="23" rx="1.6" fill="#2c2c2c" stroke="#8a8a8a" stroke-width="0.8"/><rect x="3" y="2.4" width="12" height="15.8" fill="url(#pg993)"/><path d="M4 20.6H14" stroke="#d0d0d0" stroke-width="1.2" stroke-dasharray="2 1.4"/></svg>
<div class="a" style="left:544px;top:798px;width:31px;height:2px;background:#76B9ED;"></div>
<div class="a" style="left:592.5px;top:798px;width:40px;height:2px;background:#76B9ED;"></div>
<div class="a" style="left:740px;top:798px;width:40px;height:2px;background:#76B9ED;"></div>
<div class="a" style="left:886px;top:798px;width:40px;height:2px;background:#76B9ED;"></div>
<div class="a" style="left:936px;top:798px;width:39.5px;height:2px;background:#76B9ED;"></div>
<div class="a" style="left:980px;top:798px;width:47px;height:2px;background:#76B9ED;"></div>
<div class="a" style="left:575px;top:798px;width:9px;height:2px;background:#4f7fa8;"></div>
<svg style="left:1036px;top:774px" width="13" height="8" viewBox="0 0 13 8"><path d="M0.8 7.2L6.5 1.2L12.2 7.2" fill="none" stroke="#fff" stroke-width="1.5"/></svg>
<svg style="left:1060px;top:772px" width="15" height="16" viewBox="0 0 15 16"><path d="M3.8 0.6L0.4 2.8L3.8 5L7.2 2.8ZM10.6 0.6L7.2 2.8L10.6 5L14 2.8ZM0.4 7.4L3.8 9.6L7.2 7.4L3.8 5.2ZM10.6 5.2L7.2 7.4L10.6 9.6L14 7.4ZM3.8 10.6L7.2 12.8L10.6 10.6L7.2 8.4Z" fill="#f2f2f2"/><circle cx="11" cy="12" r="3.6" fill="#2fb344"/><path d="M9.2 12L10.6 13.4L12.8 10.8" fill="none" stroke="#fff" stroke-width="1.1"/></svg>
<svg style="left:1082px;top:773px" width="18" height="13" viewBox="0 0 18 13"><rect x="5" y="3.6" width="11.4" height="7.4" fill="none" stroke="#fff" stroke-width="1.3"/><rect x="16.6" y="5.6" width="1.4" height="3.4" fill="#fff"/><rect x="6.6" y="5.2" width="5" height="4.2" fill="#fff"/><path d="M1.6 0.6V3M4.2 0.6V3M0.6 3H5.2V5.2Q2.9 7.4 0.6 5.2ZM2.9 6.6V9.4H5" fill="none" stroke="#fff" stroke-width="1.1"/></svg>
<svg style="left:1109px;top:773px" width="14" height="14" viewBox="0 0 14 14"><g fill="none" stroke="#fff" stroke-width="1.3"><path d="M0.8 13.2A12.4 12.4 0 0 1 13.2 0.8" opacity=".95"/><path d="M4.4 13.2A8.8 8.8 0 0 1 13.2 4.4"/><path d="M8 13.2A5.2 5.2 0 0 1 13.2 8"/></g><rect x="10" y="10" width="3.4" height="3.4" fill="#fff"/></svg>
<svg style="left:1130px;top:773px" width="16" height="14" viewBox="0 0 16 14"><path d="M0.7 4.6H3.4L7 1.2V12.8L3.4 9.4H0.7Z" fill="none" stroke="#fff" stroke-width="1.2"/><path d="M9.6 4.6L14.4 9.4M14.4 4.6L9.6 9.4" stroke="#fff" stroke-width="1.2"/></svg>
<svg style="left:1154px;top:772px" width="16" height="17" viewBox="0 0 16 17"><path d="M0 0H16V12H10.6L8 15.4L5.4 12H0Z" fill="#fff"/><path d="M3 3.4H13M3 6H13M3 8.6H10" stroke="#03060c" stroke-width="1.2"/></svg>
<div class="t" style="left:1180.5px;top:772.0px;font-size:17px;color:#fff;transform:scaleX(0.82);transform-origin:0 50%">A</div>
<div class="a" style="left:1275px;top:760px;width:1px;height:40px;background:#4c4c4c;"></div>
<svg style="left:1222px;top:0" width="28.5" height="1"><text x="0" y="775.3" font-size="12" fill="#fff" textLength="28.5" lengthAdjust="spacingAndGlyphs" >11:01</text></svg>
<svg style="left:1206px;top:0" width="58.0" height="1"><text x="0" y="792.3" font-size="12" fill="#fff" textLength="58.0" lengthAdjust="spacingAndGlyphs" >2016/06/03</text></svg>
<div id="wp">
<!-- side buttons -->
<div class="a" style="left:532px;top:178px;width:6px;height:48px;background:#38393b;border-radius:2px"></div>
<div class="a" style="left:532px;top:227px;width:6px;height:48px;background:#38393b;border-radius:2px"></div>
<div class="a" style="left:532px;top:311px;width:6px;height:57px;background:#38393b;border-radius:2px"></div>
<div class="a" style="left:532px;top:511px;width:6px;height:57px;background:#38393b;border-radius:2px"></div>
<div class="a" style="left:200px;top:74px;width:334px;height:608px;background:linear-gradient(180deg,#8f9390 0%,#7b807d 25%,#6e7370 52%,#5f6461 100%);border-radius:8.5px"></div><div class="a" style="left:204px;top:77px;width:325.2px;height:601.8px;background:#1f1f1f;border-radius:5.5px"></div>
<div class="a" style="left:309px;top:96px;width:116px;height:10px;border-radius:5px;background:#111"></div>
<div class="a" style="left:460px;top:89px;width:22px;height:22px;border-radius:11px;background:radial-gradient(circle at 50% 48%,#5a7fd0 0,#2a4a8a 1.2px,#1c1c20 2.5px,#262629 60%,#2b2b2e 100%)"></div>
<div class="a" style="left:460px;top:89px;width:22px;height:22px;border-radius:11px;background:conic-gradient(from 95deg at 50% 50%,rgba(110,110,115,0) 0deg,rgba(120,120,125,.5) 32deg,rgba(110,110,115,0) 68deg,rgba(0,0,0,0) 360deg)"></div>
<!-- screen -->
<div class="a" style="left:216px;top:121px;width:298px;height:497px;background:#808080;overflow:hidden">
  <div class="a" style="left:0;top:0;width:298px;height:21px;background:#000"></div>
  <svg style="left:15px;top:5px" width="18" height="12" viewBox="0 0 18 12"><g fill="#c8c8c8"><rect x="0" y="10" width="2" height="2"/><rect x="3.3" y="8" width="2.6" height="4"/><rect x="6.9" y="5.5" width="2.6" height="6.5"/><rect x="10.5" y="3" width="2.6" height="9"/><rect x="14.1" y="0" width="2.8" height="12" fill="#fff"/></g></svg>
  <svg style="left:227px;top:4px" width="24" height="14" viewBox="0 0 24 14"><rect x="1.4" y="4.6" width="17.4" height="7.6" fill="#b9b9b9" stroke="#dcdcdc" stroke-width="1"/><rect x="19.6" y="6.4" width="1.5" height="3.8" fill="#e6e6e6"/><rect x="5.2" y="4" width="10" height="6" fill="#000" opacity=".85"/><rect x="3" y="5.6" width="2.2" height="4.4" fill="#c8c8c8"/><rect x="15.2" y="5.6" width="2.2" height="4.4" fill="#c8c8c8"/><rect x="8" y="1.2" width="1.7" height="4" fill="#d8d8d8"/><rect x="11.4" y="1.2" width="1.7" height="4" fill="#d8d8d8"/><rect x="6.6" y="4.6" width="7.8" height="4.4" fill="#ececec"/><rect x="9.6" y="9" width="1.8" height="3.6" fill="#ececec"/></svg>
  <svg style="left:260px;top:0" width="22.5" height="1"><text x="0" y="16" font-size="12.7" fill="#cdcdcd" textLength="22.3" lengthAdjust="spacingAndGlyphs">9:04</text></svg>
  <div class="a" style="left:0;top:21px;width:298px;height:119px;background:#B3B3B3;border:2px solid #f0f0f0"></div>
  <div class="a" style="left:0;top:169px;width:298px;height:239px;background:#808080;border:2px solid #b4b4b4"></div>
  <svg style="left:2px;top:23px" width="120" height="36" viewBox="0 0 120 36"><g fill="none" stroke="#0000ff" stroke-width="1.7" stroke-linecap="butt" stroke-linejoin="round">
<path d="M9.7 9.4H21.8M7 14.7H24.9M16.9 14.7Q16.8 21.5 10.6 24.9"/>
<path d="M31.3 13.9L44.6 11.7M30.4 19.2L46.5 16.4M36.8 7.9L40.1 24.7"/>
<path d="M54.2 9.7H66.6Q63.5 19.5 52.4 24.3M60 18.2L68.9 23.5"/>
<path d="M81.1 7.4V25.6M81.1 12.6L89.2 17.4"/>
<path d="M102.2 11.8L106.7 8.9M106.7 7.9V24.9"/>
</g></svg>
  <svg style="left:2px;top:171.7px" width="120" height="36" viewBox="0 0 120 36"><g fill="none" stroke="#ffffff" stroke-width="1.6" stroke-linecap="butt" stroke-linejoin="round">
<path d="M9.7 9.4H21.8M7 14.7H24.9M16.9 14.7Q16.8 21.5 10.6 24.9"/>
<path d="M31.3 13.9L44.6 11.7M30.4 19.2L46.5 16.4M36.8 7.9L40.1 24.7"/>
<path d="M54.2 9.7H66.6Q63.5 19.5 52.4 24.3M60 18.2L68.9 23.5"/>
<path d="M81.1 7.4V25.6M81.1 12.6L89.2 17.4"/>
<path d="M100.6 13C100.6 7.2 109.6 7.2 109.6 13C109.6 17 103.5 20.8 100.6 25.1H110.3"/>
</g></svg>
  <div class="a" style="left:283px;top:88px;width:15px;height:74px;background:#000"></div>
  <div class="a" style="left:283px;top:336px;width:15px;height:74px;background:#000"></div>
  <div class="t" style="left:297.6px;top:101.5px;font-size:13px;color:#fff;transform-origin:0 0;transform:rotate(90deg)">000</div>
  <div class="t" style="left:297.6px;top:139px;font-size:13px;color:#fff;transform-origin:0 0;transform:rotate(90deg)">001</div>
  <div class="t" style="left:297.6px;top:349.5px;font-size:13px;color:#fff;transform-origin:0 0;transform:rotate(90deg)">056</div>
  <div class="t" style="left:297.6px;top:387px;font-size:13px;color:#fff;transform-origin:0 0;transform:rotate(90deg)">036</div>
</div>
<!-- nav -->
<svg style="left:243px;top:640px" width="18" height="14" viewBox="0 0 18 14"><path d="M8 1L2 7L8 13M2 7H17" fill="none" stroke="#858585" stroke-width="2.2"/></svg>
<svg style="left:355px;top:637px" width="21" height="21" viewBox="0 0 21 21"><path d="M0 3L8.5 1.8V9.8H0ZM9.6 1.6L21 0V9.8H9.6ZM0 10.9H8.5V18.9L0 17.7ZM9.6 10.9H21V20.6L9.6 19Z" fill="#808080"/></svg>
<svg style="left:470px;top:640px" width="18" height="16" viewBox="0 0 18 16"><circle cx="11.3" cy="7.5" r="4.6" fill="none" stroke="#858585" stroke-width="2"/><path d="M8 10.8L1.6 14.8" stroke="#858585" stroke-width="2.4"/></svg>
</div>

<div id="an">
<div class="a" style="left:683.8px;top:74px;width:314.8px;height:625px;background:linear-gradient(180deg,#8f9390 0%,#7b807d 25%,#6e7370 52%,#5f6461 100%);border-radius:8.5px"></div><div class="a" style="left:687.8px;top:77.2px;width:307.2px;height:617.8px;background:#1f1f1f;border-radius:5.5px"></div>
<div class="a" style="left:785px;top:95px;width:111px;height:10px;border-radius:5px;background:#111"></div>
<div class="a" style="left:929px;top:88px;width:21px;height:21px;border-radius:11px;background:radial-gradient(circle at 50% 48%,#5a7fd0 0,#2a4a8a 1.2px,#1c1c20 2.5px,#262629 60%,#2b2b2e 100%)"></div>
<div class="a" style="left:929px;top:88px;width:21px;height:21px;border-radius:11px;background:conic-gradient(from 95deg at 50% 50%,rgba(110,110,115,0) 0deg,rgba(120,120,125,.5) 32deg,rgba(110,110,115,0) 68deg,rgba(0,0,0,0) 360deg)"></div>
<div class="a" style="left:695px;top:118px;width:292px;height:519px;background:#808080;overflow:hidden">
  <div class="a" style="left:0;top:0;width:292px;height:19px;background:#000"></div>
  <svg style="left:217.5px;top:3px" width="38" height="13" viewBox="0 0 38 13">
    <g fill="none" stroke="#e0e0e0" stroke-width="1.7"><path d="M1 3.6Q7.5 -1.6 14 3.6"/><path d="M3 6.2Q7.5 2.6 12 6.2"/><path d="M5 8.8Q7.5 6.8 10 8.8"/></g><path d="M6 10.3L7.5 12L9 10.3Z" fill="#e0e0e0"/>
    <path d="M14.5 12.3H24V1.5Z" fill="none" stroke="#6a6a6a" stroke-width="1"/>
    <rect x="29.4" y="0.3" width="3.6" height="1.6" fill="#aaa"/><rect x="27.4" y="1.6" width="7.6" height="11" fill="#e6e6e6"/><path d="M32.4 3L29.6 8H31.4L30.2 11.4L33.2 6.4H31.4Z" fill="#333"/>
  </svg>
  <div class="t" style="left:258.5px;top:4.5px;font-size:12.2px;color:#cfcfcf;letter-spacing:-0.2px">11:01</div>
  <div class="a" style="left:0;top:19px;width:292px;height:119px;background:#C0C0C0"></div>
  <div class="a" style="left:3px;top:134px;width:286px;height:1px;background:#e8e8e8"></div>
  <div class="a" style="left:3px;top:131px;width:1px;height:3px;background:#d8d8d8"></div>
  <div class="a" style="left:288px;top:131px;width:1px;height:3px;background:#d8d8d8"></div>
  <div class="a" style="left:3px;top:401px;width:286px;height:1px;background:#8d8d8d"></div>
  <svg style="left:3px;top:22px" width="120" height="36" viewBox="0 0 120 36"><g fill="none" stroke="#0000ff" stroke-width="2.25" stroke-linecap="butt" stroke-linejoin="round">
<path d="M10.1 9.9H23.9M8 15.8H25.9M17.8 15.8Q17.6 23 10.8 26"/>
<path d="M30.9 12.9L46.9 12M30.5 18.9L48.8 17.8M38.5 8L40.8 26.8"/>
<path d="M55.3 10.7H67.4Q64.5 20.8 53.4 26M61.4 19.2L70.3 26.4"/>
<path d="M82 8V26.8M82 14L92.4 17.9"/>
<path d="M103.1 12.8L108 9.9M108 8.9V25.4"/>
</g></svg>
  <svg style="left:3px;top:171px" width="120" height="36" viewBox="0 0 120 36"><g fill="none" stroke="#555555" stroke-width="2.05" stroke-linecap="butt" stroke-linejoin="round">
<path d="M10.1 9.9H23.9M8 15.8H25.9M17.8 15.8Q17.6 23 10.8 26"/>
<path d="M30.9 12.9L46.9 12M30.5 18.9L48.8 17.8M38.5 8L40.8 26.8"/>
<path d="M55.3 10.7H67.4Q64.5 20.8 53.4 26M61.4 19.2L70.3 26.4"/>
<path d="M82 8V26.8M82 14L92.4 17.9"/>
<path d="M102.8 14.2C102.8 8.4 111.3 8.4 111.3 14C111.3 18 105.5 21.5 102.6 24.9H112.1"/>
</g></svg>
  <div class="a" style="left:0;top:482px;width:292px;height:37px;background:#000;border-bottom:1px solid #3c3c3c"></div>
  <svg style="left:47px;top:494px" width="26" height="15" viewBox="0 0 26 15"><path d="M7 1L1 5.5L7 10M1 5.5H19.5A4 4 0 0 1 19.5 13.5H12" fill="none" stroke="#a0a0a0" stroke-width="1.5"/></svg>
  <svg style="left:133px;top:494px" width="27" height="14" viewBox="0 0 30 15" preserveAspectRatio="none"><path d="M1 13.8V6.5L15 1L29 6.5V13.8Z" fill="none" stroke="#a0a0a0" stroke-width="1.5"/></svg>
  <svg style="left:219px;top:494px" width="28" height="15" viewBox="0 0 28 15"><path d="M1 5H21.5V13.8H1ZM7 1H26.5V9.5" fill="none" stroke="#a0a0a0" stroke-width="1.6"/></svg>
</div>
</div>

<div class="a" style="left:546px;top:74px;width:38px;height:318px;background:#1b1b1b;border-radius:4px"></div>
<svg style="left:557px;top:85px" width="16" height="16" viewBox="0 0 16 16"><path d="M1.2 1.2L14.8 14.8M14.8 1.2L1.2 14.8" stroke="#fff" stroke-width="3.3"/></svg>
<svg style="left:554px;top:112px" width="22" height="22" viewBox="0 0 22 22"><rect x="0.9" y="0.9" width="20.2" height="20.2" fill="none" stroke="#8a8a8a" stroke-width="1.8"/><rect x="4" y="15" width="14" height="2.8" fill="#fff"/></svg>
<div class="a" style="left:550px;top:139.9px;width:30px;height:1.3px;background:#b5b5b5;"></div>
<div class="a" style="left:549.5px;top:143px;width:30.5px;height:29.8px;background:#1b1b1b;border:1.3px solid #0A84D8"></div>
<svg style="left:559.4px;top:150px" width="12" height="17.4" viewBox="0 0 14 20"><path d="M0.5 0.5V15.5L4.2 12L6.8 18.4L9.6 17.2L7 11H12Z" fill="#fff"/></svg>
<svg style="left:555px;top:177.6px" width="18" height="22" viewBox="0 0 18 22"><path d="M6.6 1.2Q6.6 0 7.9 0Q9.2 0 9.2 1.2V8.2L10 8.3V6.6Q10 5.6 11 5.6Q12 5.6 12 6.6V8.7L12.8 8.9V7.6Q12.8 6.7 13.7 6.7Q14.6 6.7 14.6 7.6V9.6L15.3 9.8V8.9Q15.3 8.1 16.1 8.1Q17 8.1 17 9V14.6Q17 21 11.4 21Q7.6 21 5.6 18.4L1 12.6Q0.4 11.6 1.3 11Q2.2 10.5 3.1 11.3L6.6 14.6Z" fill="#fff"/></svg>
<div class="a" style="left:550px;top:204.9px;width:30px;height:1.3px;background:#b5b5b5;"></div>
<svg style="left:553.1px;top:210.3px" width="24" height="24" viewBox="0 0 24 24"><g transform="translate(12,12)"><path d="M5.3 5.3A7.5 7.5 0 1 0 -5 5.6" fill="none" stroke="#fff" stroke-width="3.3"/><path d="M-8.3 9.7L-1.1 9.9L-0.9 2.4Z" fill="#fff"/></g></svg>
<svg style="left:553.1px;top:240.8px" width="24" height="24" viewBox="0 0 24 24"><g transform="translate(12,12)"><path d="M-5.3 5.3A7.5 7.5 0 1 1 5 5.6" fill="none" stroke="#fff" stroke-width="3.3"/><path d="M8.3 9.7L1.1 9.9L0.9 2.4Z" fill="#fff"/></g></svg>
<svg style="left:554.5px;top:272.5px" width="21" height="21" viewBox="0 0 21 21"><path d="M0.8 5.4V0.8H5.4M15.6 0.8H20.2V5.4M20.2 15.6V20.2H15.6M5.4 20.2H0.8V15.6" fill="none" stroke="#fff" stroke-width="1.6"/><rect x="5" y="5" width="11" height="11" fill="none" stroke="#fff" stroke-width="2.2"/></svg>
<svg style="left:555px;top:304.5px" width="20" height="19" viewBox="0 0 20 19"><circle cx="12.6" cy="6.6" r="5.4" fill="none" stroke="#fff" stroke-width="2.3"/><path d="M8.4 10.6L1.6 17.2" stroke="#fff" stroke-width="3.3" stroke-linecap="round"/><path d="M12.6 3.6V9.6M9.6 6.6H15.6" stroke="#fff" stroke-width="1.7"/></svg>
<svg style="left:558px;top:333.5px" width="14" height="20" viewBox="0 0 14 20"><path d="M1.8 6Q2 1.8 7 1.8Q12 1.8 12 5.7Q12 8 9.6 9.5Q7.6 10.8 7.6 13.2" fill="none" stroke="#fff" stroke-width="3.9"/><circle cx="7.5" cy="17.4" r="2.3" fill="#fff"/></svg>
<svg style="left:556px;top:366px" width="18" height="14" viewBox="0 0 18 14"><path d="M1.2 0.8L8 7L1.2 13.2M8.8 0.8L15.6 7L8.8 13.2" fill="none" stroke="#fff" stroke-width="2.9"/></svg>
<div class="a" style="left:1013px;top:74px;width:38px;height:322.5px;background:#1b1b1b;border-radius:4px"></div>
<svg style="left:1024px;top:85px" width="16" height="16" viewBox="0 0 16 16"><path d="M1.2 1.2L14.8 14.8M14.8 1.2L1.2 14.8" stroke="#fff" stroke-width="3.3"/></svg>
<svg style="left:1021px;top:112px" width="22" height="22" viewBox="0 0 22 22"><rect x="0.9" y="0.9" width="20.2" height="20.2" fill="none" stroke="#8a8a8a" stroke-width="1.8"/><rect x="4" y="15" width="14" height="2.8" fill="#fff"/></svg>
<div class="a" style="left:1017px;top:139.9px;width:30px;height:1.3px;background:#b5b5b5;"></div>
<svg style="left:1022px;top:147px" width="20" height="22" viewBox="0 0 20 22"><path d="M5.4 5.2A8.6 8.6 0 1 0 14.6 5.2" fill="none" stroke="#fff" stroke-width="1.9"/><path d="M10 0.6V11" stroke="#fff" stroke-width="1.9"/></svg>
<div class="a" style="left:1017px;top:174.70000000000002px;width:30px;height:1.3px;background:#b5b5b5;"></div>
<div class="a" style="left:1016.5px;top:178.3px;width:30.5px;height:29.8px;background:#1b1b1b;border:1.3px solid #0A84D8"></div>
<svg style="left:1026.4px;top:185.5px" width="12" height="17.4" viewBox="0 0 14 20"><path d="M0.5 0.5V15.5L4.2 12L6.8 18.4L9.6 17.2L7 11H12Z" fill="#fff"/></svg>
<svg style="left:1021px;top:209px" width="24" height="27" viewBox="0 0 24 27"><circle cx="9.6" cy="6.4" r="4.8" fill="none" stroke="#fff" stroke-width="1.5"/><circle cx="5.6" cy="16" r="4.4" fill="none" stroke="#fff" stroke-width="1.5"/><path d="M8.4 5Q8.4 3.6 9.7 3.6Q11 3.6 11 5V13L11.8 13.1V11.6Q11.8 10.6 12.8 10.6Q13.8 10.6 13.8 11.6V13.5L14.6 13.7V12.6Q14.6 11.7 15.5 11.7Q16.4 11.7 16.4 12.6V14.4L17.1 14.6V13.9Q17.1 13.1 17.9 13.1Q18.8 13.1 18.8 14V19.6Q18.8 26 13.2 26Q9.4 26 7.4 23.4L3.4 18Q2.8 17 3.7 16.4Q4.6 15.9 5.5 16.7L8.4 19.6Z" fill="#fff" stroke="#1b1b1b" stroke-width="0.9"/></svg>
<div class="a" style="left:1017px;top:239.70000000000002px;width:30px;height:1.3px;background:#b5b5b5;"></div>
<svg style="left:1020.0999999999999px;top:246px" width="24" height="24" viewBox="0 0 24 24"><g transform="translate(12,12)"><path d="M5.3 5.3A7.5 7.5 0 1 0 -5 5.6" fill="none" stroke="#fff" stroke-width="3.3"/><path d="M-8.3 9.7L-1.1 9.9L-0.9 2.4Z" fill="#fff"/></g></svg>
<svg style="left:1020.0999999999999px;top:276.3px" width="24" height="24" viewBox="0 0 24 24"><g transform="translate(12,12)"><path d="M-5.3 5.3A7.5 7.5 0 1 1 5 5.6" fill="none" stroke="#fff" stroke-width="3.3"/><path d="M8.3 9.7L1.1 9.9L0.9 2.4Z" fill="#fff"/></g></svg>
<svg style="left:1021.5px;top:307.5px" width="21" height="21" viewBox="0 0 21 21"><path d="M0.8 5.4V0.8H5.4M15.6 0.8H20.2V5.4M20.2 15.6V20.2H15.6M5.4 20.2H0.8V15.6" fill="none" stroke="#fff" stroke-width="1.6"/><rect x="5" y="5" width="11" height="11" fill="none" stroke="#fff" stroke-width="2.2"/></svg>
<svg style="left:1022px;top:339.5px" width="20" height="19" viewBox="0 0 20 19"><circle cx="12.6" cy="6.6" r="5.4" fill="none" stroke="#fff" stroke-width="2.3"/><path d="M8.4 10.6L1.6 17.2" stroke="#fff" stroke-width="3.3" stroke-linecap="round"/><path d="M12.6 3.6V9.6M9.6 6.6H15.6" stroke="#fff" stroke-width="1.7"/></svg>
<svg style="left:1023px;top:371px" width="18" height="14" viewBox="0 0 18 14"><path d="M1.2 0.8L8 7L1.2 13.2M8.8 0.8L15.6 7L8.8 13.2" fill="none" stroke="#fff" stroke-width="2.9"/></svg>
</div></body></html>
